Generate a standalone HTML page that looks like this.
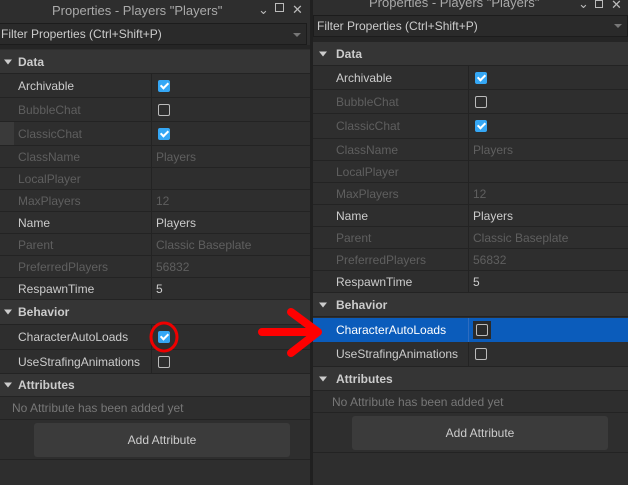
<!DOCTYPE html><html><head><style>
*{margin:0;padding:0;box-sizing:border-box}
body{width:628px;height:485px;background:#2e2e2e;position:relative;overflow:hidden;font-family:"Liberation Sans",sans-serif;font-size:12px;color:#ccc}
.p{position:absolute;top:0;height:485px;background:#2e2e2e;overflow:hidden}
.r{position:absolute;left:0;right:0;border-bottom:1px solid #232323}
.r span{position:absolute;top:50%;transform:translateY(-50%);white-space:nowrap}
.n{left:18px}.v{left:156px}
.d{color:#5f5f5f}
.h{background:#353535;font-weight:bold;color:#ccc}
.h .t{position:absolute;left:4px;top:50%;transform:translateY(-50%);width:0;height:0;border-left:4px solid transparent;border-right:4px solid transparent;border-top:5px solid #ccc}
.col{position:absolute;top:0;bottom:0;left:151px;width:1px;background:#232323}
.cb{position:absolute;top:50%;transform:translateY(-50%);width:12px;height:12px;border-radius:2px;border:1.5px solid #bbb}
.ck{background:#35a7f5;border-color:#35a7f5}
.ck:after{content:"";position:absolute;left:3px;top:0px;width:3px;height:6px;border:solid #fff;border-width:0 2px 2px 0;transform:rotate(45deg)}
.btn{position:absolute;background:#3b3b3b;border-radius:3px;color:#ccc;text-align:center}
</style></head><body>
<!-- LEFT -->
<div class="p" style="left:0;width:310px">
 <div style="position:absolute;top:0;left:0;right:0;height:22px;color:#aaa;font-size:13px"><span style="position:absolute;left:52px;top:3px">Properties - Players "Players"</span>
 <span style="position:absolute;left:258px;top:2px;color:#bbb">⌄</span><span style="position:absolute;left:275px;top:3px;width:9px;height:9px;border:1.5px solid #bbb"></span><span style="position:absolute;left:292px;top:2px;color:#bbb">✕</span></div>
 <div style="position:absolute;top:23px;left:-2px;width:309px;height:22px;border:1px solid #1c1c1c;background:#2a2a2a;color:#ccc"><span style="position:absolute;left:2px;top:3px">Filter Properties (Ctrl+Shift+P)</span><span style="position:absolute;right:5px;top:9px;border-left:4px solid transparent;border-right:4px solid transparent;border-top:4px solid #777"></span></div>
 <div style="position:absolute;top:45px;left:0;right:0;height:4px;background:#252525"></div>
 <div class="r h" style="top:50px;height:24px"><i class="t"></i><span class="n">Data</span></div>
 <div style="position:absolute;top:74px;left:0;right:0;height:226px"><div class="col"></div></div>
 <div class="r" style="top:74px;height:24px"><span class="n">Archivable</span><i class="cb ck" style="left:158px"></i></div>
 <div class="r" style="top:98px;height:24px"><span class="n d">BubbleChat</span><i class="cb" style="left:158px"></i></div>
 <div class="r" style="top:122px;height:24px"><i style="position:absolute;left:0;top:0;width:14px;height:23px;background:#3a3a3a"></i><span class="n d">ClassicChat</span><i class="cb ck" style="left:158px"></i></div>
 <div class="r" style="top:146px;height:22px"><span class="n d">ClassName</span><span class="v d">Players</span></div>
 <div class="r" style="top:168px;height:22px"><span class="n d">LocalPlayer</span></div>
 <div class="r" style="top:190px;height:22px"><span class="n d">MaxPlayers</span><span class="v d">12</span></div>
 <div class="r" style="top:212px;height:22px"><span class="n">Name</span><span class="v">Players</span></div>
 <div class="r" style="top:234px;height:22px"><span class="n d">Parent</span><span class="v d">Classic Baseplate</span></div>
 <div class="r" style="top:256px;height:22px"><span class="n d">PreferredPlayers</span><span class="v d">56832</span></div>
 <div class="r" style="top:278px;height:22px"><span class="n">RespawnTime</span><span class="v">5</span></div>
 <div class="r h" style="top:300px;height:25px"><i class="t"></i><span class="n">Behavior</span></div>
 <div style="position:absolute;top:325px;left:0;right:0;height:49px"><div class="col" style="left:151px"></div></div>
 <div class="r" style="top:325px;height:25px"><span class="n">CharacterAutoLoads</span><i class="cb ck" style="left:158px"></i></div>
 <div class="r" style="top:350px;height:24px"><span class="n">UseStrafingAnimations</span><i class="cb" style="left:158px"></i></div>
 <div class="r h" style="top:374px;height:23px"><i class="t"></i><span class="n">Attributes</span></div>
 <div class="r" style="top:397px;height:23px"><span class="d" style="left:12px;color:#777">No Attribute has been added yet</span></div>
 <div class="btn" style="left:34px;top:423px;width:256px;height:34px;line-height:34px">Add Attribute</div>
 <div style="position:absolute;top:459px;left:0;right:0;height:1px;background:#232323"></div>
</div>
<div style="position:absolute;left:310px;top:0;width:3px;height:485px;background:#202020"></div>
<!-- RIGHT -->
<div class="p" style="left:313px;width:315px">
 <div style="position:absolute;top:0;left:0;right:0;height:16px;color:#aaa;font-size:13px"><span style="position:absolute;left:56px;top:-5px">Properties - Players "Players"</span>
 <span style="position:absolute;left:265px;top:-4px;color:#bbb">⌄</span><span style="position:absolute;left:282px;top:0px;width:8px;height:8px;border:1.5px solid #bbb"></span><span style="position:absolute;left:298px;top:-3px;color:#bbb">✕</span></div>
 <div style="position:absolute;top:15px;left:0;width:315px;height:22px;border:1px solid #1c1c1c;background:#2a2a2a"><span style="position:absolute;left:3px;top:3px">Filter Properties (Ctrl+Shift+P)</span><span style="position:absolute;right:5px;top:8px;border-left:4px solid transparent;border-right:4px solid transparent;border-top:4px solid #777"></span></div>
 <div style="position:absolute;top:37px;left:0;right:0;height:5px;background:#252525"></div>
 <div class="r h" style="top:42px;height:24px"><i class="t" style="left:6px"></i><span class="n" style="left:23px">Data</span></div>
 <div style="position:absolute;top:66px;left:0;right:0;height:227px"><div class="col" style="left:155px"></div></div>
 <div class="r" style="top:66px;height:24px"><span class="n" style="left:23px">Archivable</span><i class="cb ck" style="left:162px"></i></div>
 <div class="r" style="top:90px;height:24px"><span class="n d" style="left:23px">BubbleChat</span><i class="cb" style="left:162px"></i></div>
 <div class="r" style="top:114px;height:25px"><span class="n d" style="left:23px">ClassicChat</span><i class="cb ck" style="left:162px"></i></div>
 <div class="r" style="top:139px;height:22px"><span class="n d" style="left:23px">ClassName</span><span class="v d" style="left:160px">Players</span></div>
 <div class="r" style="top:161px;height:22px"><span class="n d" style="left:23px">LocalPlayer</span></div>
 <div class="r" style="top:183px;height:22px"><span class="n d" style="left:23px">MaxPlayers</span><span class="v d" style="left:160px">12</span></div>
 <div class="r" style="top:205px;height:22px"><span class="n" style="left:23px">Name</span><span class="v" style="left:160px">Players</span></div>
 <div class="r" style="top:227px;height:22px"><span class="n d" style="left:23px">Parent</span><span class="v d" style="left:160px">Classic Baseplate</span></div>
 <div class="r" style="top:249px;height:22px"><span class="n d" style="left:23px">PreferredPlayers</span><span class="v d" style="left:160px">56832</span></div>
 <div class="r" style="top:271px;height:22px"><span class="n" style="left:23px">RespawnTime</span><span class="v" style="left:160px">5</span></div>
 <div class="r h" style="top:293px;height:24px"><i class="t" style="left:6px"></i><span class="n" style="left:23px">Behavior</span></div>
 <div class="r" style="top:318px;height:24px;background:#0b5cbb;border:none"><span class="n" style="left:23px;color:#fff">CharacterAutoLoads</span><i style="position:absolute;left:155px;top:0;width:1px;height:24px;background:#2d6cc0"></i><i style="position:absolute;left:160px;top:3px;width:18px;height:18px;background:#2a2a2a"></i><i class="cb" style="left:163px"></i></div>
 <div style="position:absolute;top:342px;left:155px;width:1px;height:25px;background:#232323"></div>
 <div class="r" style="top:342px;height:25px"><span class="n" style="left:23px">UseStrafingAnimations</span><i class="cb" style="left:162px"></i></div>
 <div class="r h" style="top:367px;height:24px"><i class="t" style="left:6px"></i><span class="n" style="left:23px">Attributes</span></div>
 <div class="r" style="top:391px;height:22px"><span style="left:19px;color:#777">No Attribute has been added yet</span></div>
 <div class="btn" style="left:39px;top:416px;width:256px;height:34px;line-height:34px">Add Attribute</div>
 <div style="position:absolute;top:452px;left:0;right:0;height:1px;background:#232323"></div>
</div>
<!-- annotations -->
<svg style="position:absolute;left:0;top:0" width="628" height="485">
 <ellipse cx="164" cy="337" rx="13" ry="14" fill="none" stroke="#e00" stroke-width="3"/>
 <path d="M262 332 L316 332 M291 312 L318 332 L291 353" fill="none" stroke="#f00" stroke-width="8" stroke-linecap="round" stroke-linejoin="round"/>
</svg>
</body></html>
